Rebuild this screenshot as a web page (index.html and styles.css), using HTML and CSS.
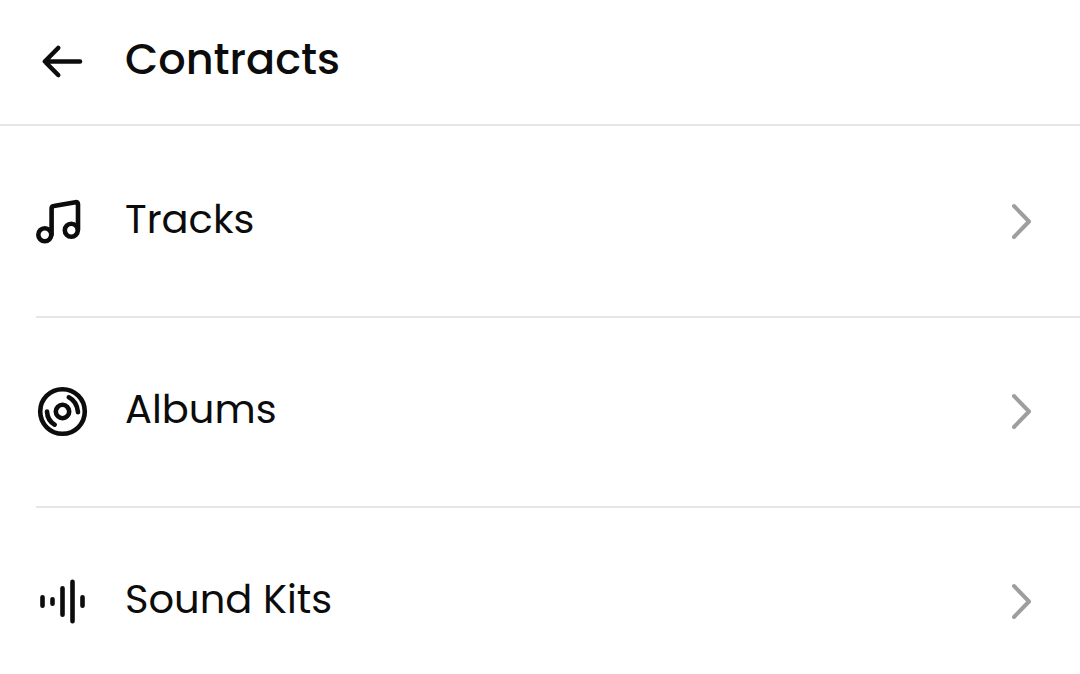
FILE: index.html
```
<!DOCTYPE html>
<html lang="en">
<head>
    <meta charset="UTF-8">
    <meta name="viewport" content="width=device-width, initial-scale=1.0">
    <title>Contracts</title>
    <link rel="stylesheet" href="styles.css">
</head>
<body>
    <header class="header">
        <button class="back-btn" type="button" aria-label="Back">
            <svg class="icon" viewBox="0 0 52 52">
                <path d="M44 26.5H9M22.2 13L8.8 26.5L22.2 40"/>
            </svg>
        </button>
        <h1 class="title">Contracts</h1>
    </header>

    <nav class="menu">
        <a class="menu-item" href="#tracks">
            <svg class="icon" viewBox="0 0 52 52">
                <circle cx="8.8" cy="39.8" r="6.5"/>
                <circle cx="35.3" cy="35.2" r="6.5"/>
                <path d="M15.6 39.5V13.5Q15.6 11.3 17.8 11L39.5 7.2Q42 6.8 42 9.3V35"/>
            </svg>
            <span class="label">Tracks</span>
            <svg class="chevron" viewBox="0 0 20 36">
                <path d="M2 3L17 18.5L2 34"/>
            </svg>
        </a>
        <a class="menu-item" href="#albums">
            <svg class="icon" viewBox="0 0 52 52">
                <circle cx="26.5" cy="26.5" r="22.3"/>
                <circle cx="26.5" cy="26.5" r="6.7"/>
                <path d="M32.8 12.3Q41 16.5 42 27.2M11 26.5Q11.5 35.5 18.7 39.7"/>
            </svg>
            <span class="label">Albums</span>
            <svg class="chevron" viewBox="0 0 20 36">
                <path d="M2 3L17 18.5L2 34"/>
            </svg>
        </a>
        <a class="menu-item" href="#sound-kits">
            <svg class="icon" viewBox="0 0 52 52">
                <path d="M6.5 22.2V30.8M16.5 24.2V28.8M26.5 13.2V39.8M36.5 6.7V46.3M46.5 22.2V30.8"/>
            </svg>
            <span class="label">Sound Kits</span>
            <svg class="chevron" viewBox="0 0 20 36">
                <path d="M2 3L17 18.5L2 34"/>
            </svg>
        </a>
    </nav>
</body>
</html>
```

FILE: styles.css
```
* {
    box-sizing: border-box;
}
body {
    margin: 0;
    background: #fff;
    color: #0c0c0c;
    font-family: Poppins, Inter, sans-serif;
    overflow-x: hidden;
}
.header {
    display: flex;
    align-items: center;
    gap: 37px;
    padding: 35px 36px 37px;
    border-bottom: 2px solid #e6e6e6;
}
.back-btn {
    display: flex;
    padding: 0;
    background: none;
    border: none;
    color: inherit;
    cursor: pointer;
}
.title {
    margin: 0;
    padding-bottom: 4px;
    font-size: 43px;
    font-weight: 500;
    line-height: 48px;
}
.icon {
    flex: none;
    width: 52px;
    height: 52px;
    fill: none;
    stroke: currentColor;
    stroke-width: 4.6;
    stroke-linecap: round;
    stroke-linejoin: round;
}
.menu {
    padding-left: 36px;
}
.menu-item {
    display: flex;
    align-items: center;
    gap: 37px;
    padding: 69px 48px 69px 0;
    color: inherit;
    text-decoration: none;
}
/* divider drawn inside the row so every row keeps the same height */
.menu-item + .menu-item {
    box-shadow: inset 0 2px #e6e6e6;
}
.label {
    flex: 1;
    padding-bottom: 4px;
    font-size: 40px;
    line-height: 48px;
}
.chevron {
    flex: none;
    width: 20px;
    height: 36px;
    fill: none;
    stroke: #9e9e9e;
    stroke-width: 4;
    stroke-linecap: round;
    stroke-linejoin: round;
}
```
